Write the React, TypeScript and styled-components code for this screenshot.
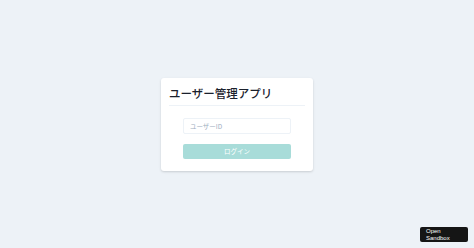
import React from "react";
import styled, { createGlobalStyle } from "styled-components";

const GlobalStyle = createGlobalStyle`
  html, body { margin: 0; padding: 0; }
  body {
    background: #edf2f7;
    font-family: "Noto Sans CJK JP", "Noto Sans", sans-serif;
  }
  #root { min-height: 100vh; }
`;

const Page = styled.main`
  min-height: 100vh;
  display: flex;
  align-items: center;
  justify-content: center;
`;

const Card = styled.section`
  width: 152px;
  box-sizing: border-box;
  background: #ffffff;
  border-radius: 3px;
  box-shadow: 0 1px 3px rgba(0, 0, 0, 0.1), 0 1px 2px rgba(0, 0, 0, 0.06);
  padding: 8px 8px 12px;
`;

const Title = styled.h1`
  margin: 0;
  font-size: 11.5px;
  line-height: 15px;
  font-weight: 500;
  color: #1a202c;
  padding-bottom: 4px;
  border-bottom: 1px solid #edf2f7;
`;

const Form = styled.form`
  width: 108px;
  margin: 12px auto 0;
  display: flex;
  flex-direction: column;
  gap: 10px;
`;

const Input = styled.input`
  box-sizing: border-box;
  height: 16px;
  width: 100%;
  border: 1px solid #edf2f7;
  border-radius: 2px;
  padding: 0 6px;
  font-family: inherit;
  font-size: 6.5px;
  color: #2d3748;
  outline: none;
  &::placeholder { color: #a0aec0; }
`;

const Button = styled.button<{ $disabled?: boolean }>`
  height: 15px;
  width: 100%;
  border: none;
  border-radius: 2px;
  background: ${(p) => (p.$disabled ? "#a8dcd9" : "#38b2ac")};
  color: #ffffff;
  font-family: inherit;
  font-size: 6.5px;
  padding: 0;
  cursor: pointer;
`;

const Badge = styled.a`
  position: fixed;
  right: 6px;
  bottom: 6px;
  width: 48px;
  height: 15px;
  box-sizing: border-box;
  padding: 1px 6px;
  background: #151515;
  border-radius: 2px;
  color: #ffffff;
  font-family: "Liberation Sans", Arial, sans-serif;
  font-size: 6px;
  line-height: 6.5px;
  text-decoration: none;
`;

export default function App() {
  return (
    <>
      <GlobalStyle />
      <Page>
        <Card>
          <Title>ユーザー管理アプリ</Title>
          <Form onSubmit={(e) => e.preventDefault()}>
            <Input placeholder="ユーザーID" />
            <Button $disabled type="submit">ログイン</Button>
          </Form>
        </Card>
      </Page>
      <Badge href="#">Open<br />Sandbox</Badge>
    </>
  );
}
